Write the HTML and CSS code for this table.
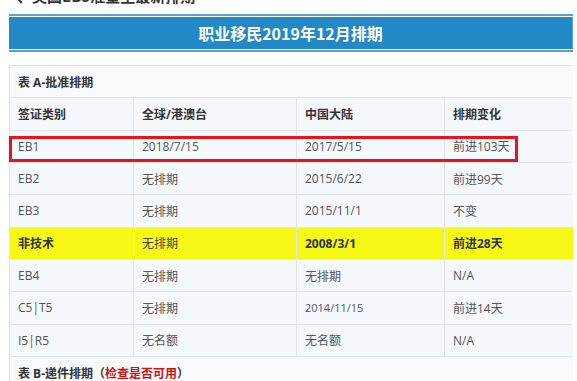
FILE: index.html
```html
<!DOCTYPE html>
<html lang="zh">
<head>
<meta charset="utf-8">
<link rel="stylesheet" href="styles.css">
</head>
<body>
<div class="page">
  <div class="cut-heading"><h2>、美国EB5准望至最新排期</h2></div>
  <div class="banner"><div class="banner-inner">职业移民2019年12月排期</div></div>
  <div class="table-wrap">
    <table class="visa">
      <colgroup><col class="c1"><col class="c2"><col class="c3"><col class="c4"></colgroup>
      <tr class="caption-row"><td colspan="4">表 A-批准排期</td></tr>
      <tr class="head-row"><td>签证类别</td><td>全球/港澳台</td><td>中国大陆</td><td>排期变化</td></tr>
      <tr><td>EB1</td><td>2018/7/15</td><td>2017/5/15</td><td>前进103天</td></tr>
      <tr><td>EB2</td><td>无排期</td><td>2015/6/22</td><td>前进99天</td></tr>
      <tr><td>EB3</td><td>无排期</td><td>2015/11/1</td><td>不变</td></tr>
      <tr class="hl"><td class="b">非技术</td><td>无排期</td><td class="b">2008/3/1</td><td class="b">前进28天</td></tr>
      <tr><td>EB4</td><td>无排期</td><td>无排期</td><td>N/A</td></tr>
      <tr><td>C5|T5</td><td>无排期</td><td class="small">2014/11/15</td><td>前进14天</td></tr>
      <tr><td>I5|R5</td><td>无名额</td><td>无名额</td><td>N/A</td></tr>
      <tr class="caption-row"><td colspan="4">表 B-递件排期（<span class="red">检查是否可用</span>）</td></tr>
    </table>
    <div class="mark"></div>
  </div>
</div>
</body>
</html>
```

FILE: styles.css
```css
html, body {
  margin: 0;
  padding: 0;
  background: #ffffff;
  overflow: hidden;
}
body {
  font-family: "Open Sans", "Noto Sans CJK SC", sans-serif;
  font-size: 12px;
  color: #555;
}
.page {
  width: 564px;
  margin-left: 9px;
  height: 381px;
  overflow: hidden;
  display: flow-root;
}
.cut-heading {
  height: 5px;
  overflow: hidden;
  padding-left: 8px;
}
.cut-heading h2 {
  margin: -13px 0 0 0;
  font-size: 15px;
  line-height: 18px;
  font-weight: bold;
  color: #333;
  font-family: "Noto Sans CJK SC", sans-serif;
  white-space: nowrap;
}
.banner {
  margin-top: 9px;
  border-top: 2px solid #5d9fcf;
  border-bottom: 2px solid #5d9fcf;
  padding: 1px 0;
}
.banner-inner {
  height: 32px;
  background: #2388c6;
  border-right: 1px solid #5aa6da;
  color: #fff;
  font-weight: bold;
  font-size: 16px;
  font-family: "Noto Sans CJK SC", sans-serif;
  line-height: 32px;
  text-align: center;
}
.table-wrap {
  position: relative;
  margin-top: 13px;
}
.visa {
  width: 564px;
  border-collapse: collapse;
  table-layout: fixed;
  background: #f5f8fc;
}
.c1 { width: 124px; }
.c2 { width: 163px; }
.c3 { width: 148px; }
.c4 { width: 129px; }
.visa td {
  height: 32.33px;
  box-sizing: border-box;
  padding: 0 8px;
  border: 1px solid #e1e6ec;
  vertical-align: middle;
  white-space: nowrap;
}
.caption-row td {
  font-weight: bold;
  color: #333;
  background: #f9fafc;
}
.head-row td {
  font-weight: bold;
  color: #333;
}
.hl td {
  background: #f8f816;
  color: #444;
}
.b {
  font-weight: bold;
  color: #333 !important;
}
.small {
  font-size: 11px;
}
.red {
  color: #cc1111;
}
.mark {
  position: absolute;
  left: 0;
  top: 71px;
  width: 509px;
  height: 26px;
  box-sizing: border-box;
  border: 3px solid #e8141c;
}
```
